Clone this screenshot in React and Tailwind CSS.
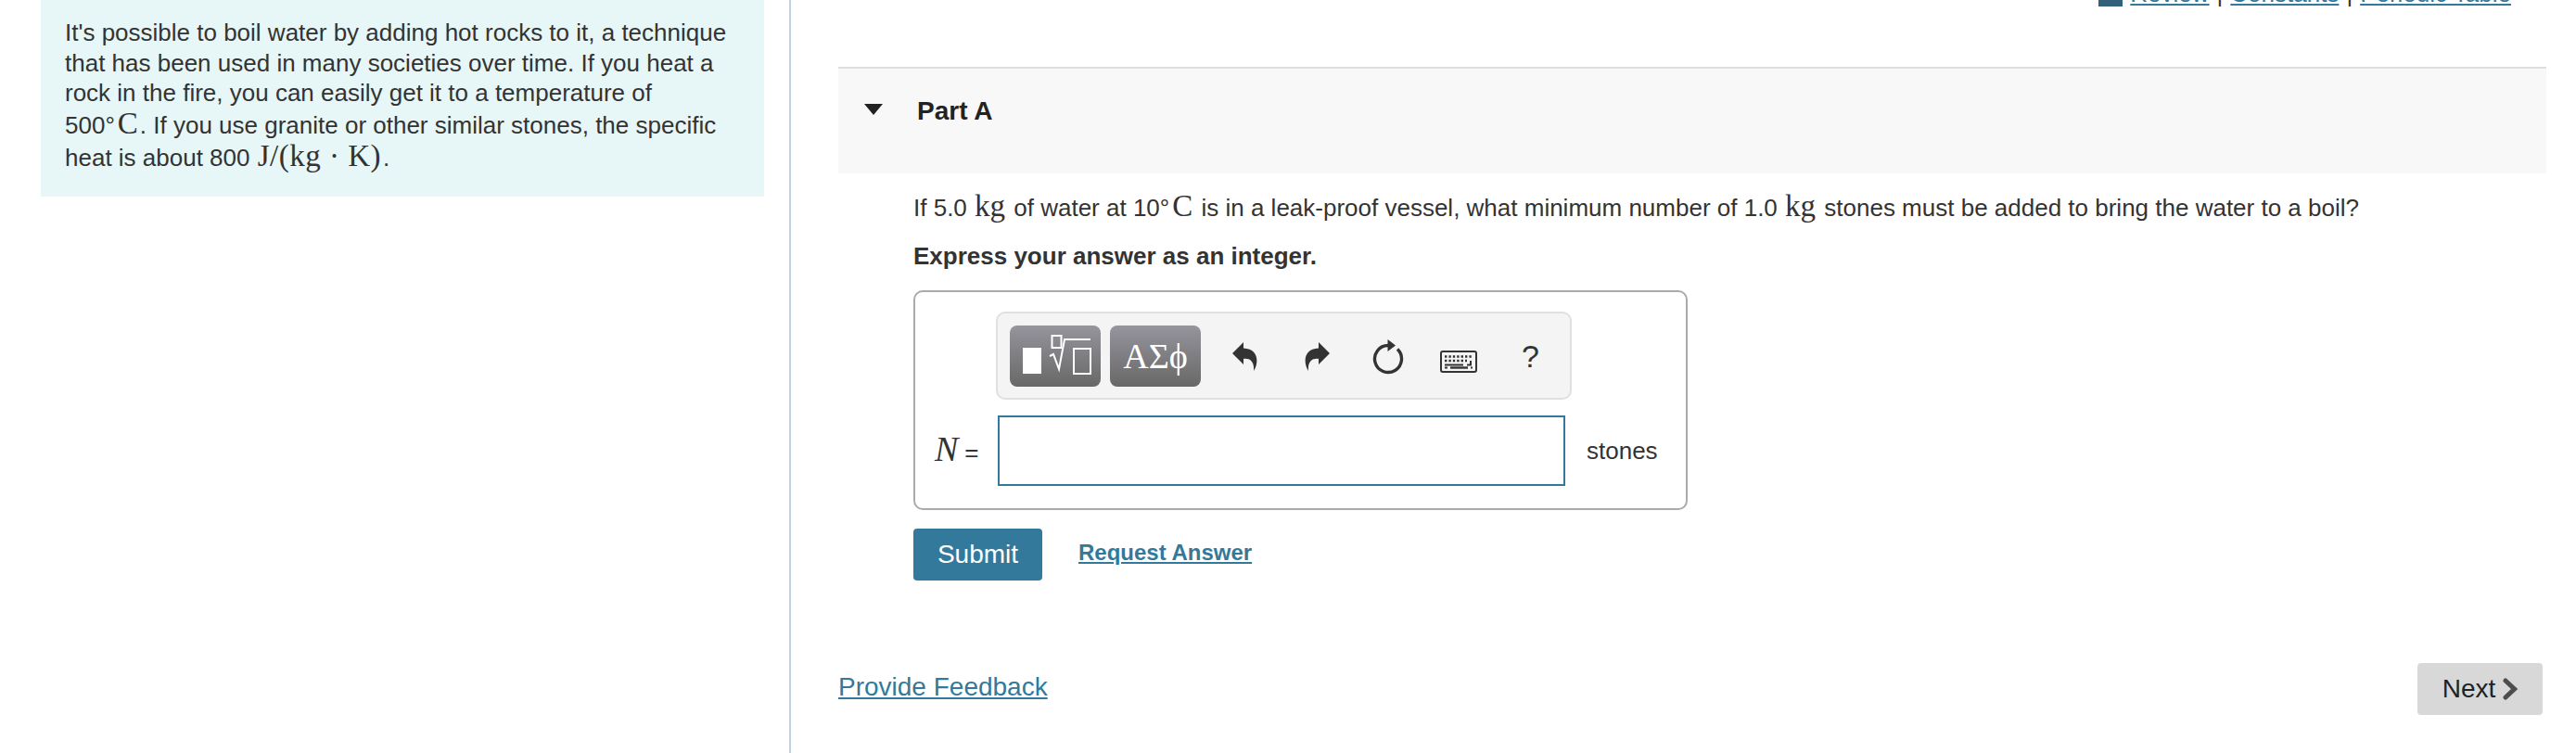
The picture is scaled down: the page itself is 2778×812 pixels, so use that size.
import React from "react";

const sans = { fontFamily: '"Liberation Sans", Arial, sans-serif' };

// TeX-looking inline math
const M = ({ children, className = "" }) => (
  <span className={`font-['Liberation_Serif',serif] text-[33px] leading-none ml-[1px] mr-[2px] ${className}`}>
    {children}
  </span>
);

const MathIcon = () => (
  <svg width="98" height="66" viewBox="0 0 98 66" fill="none">
    <rect x="14" y="24" width="20" height="28" fill="#fff" />
    <rect x="45.5" y="11" width="10" height="13" stroke="#fff" strokeWidth="2" />
    <path d="M43 33 L47 31 L53 47 L59 15 L87 15" stroke="#fff" strokeWidth="2" />
    <rect x="69" y="25" width="18" height="27" stroke="#fff" strokeWidth="2" />
  </svg>
);

const UndoIcon = ({ flip }) => (
  <svg className={flip ? "-scale-x-100" : ""} width="28" height="32" viewBox="0 0 28 32">
    <path d="M12 0 L0 12 L12 24 V18 C18 17 24 20 23 31 C29 22 28 7 12 6.5 Z" fill="#333" />
  </svg>
);

const ResetIcon = () => (
  <svg width="36" height="38" viewBox="0 0 36 38" fill="none">
    <path d="M18 6.5 A14.5 14.5 0 1 0 28 10.5" stroke="#333" strokeWidth="3.4" />
    <path d="M17.5 0 L26 6.5 L17.5 13 Z" fill="#333" />
  </svg>
);

const KeyboardIcon = () => (
  <svg width="40" height="24" viewBox="0 0 40 24" fill="none">
    <rect x="1" y="1" width="38" height="22" rx="2" stroke="#333" strokeWidth="2" />
    <path d="M5 6.5h29M5 11h24" stroke="#333" strokeWidth="2.4" strokeDasharray="2.4 2" />
    <path d="M33 11v4.5h-4" stroke="#333" strokeWidth="2" />
    <path d="M11 18.5h19" stroke="#333" strokeWidth="2.4" />
    <path d="M5 15.5h20M5 18.5h3M33 18.5h2" stroke="#333" strokeWidth="2" />
  </svg>
);

const ToolButton = ({ children }) => (
  <div className="w-[98px] h-[66px] rounded-[8px] bg-linear-to-b from-[#96959d] to-[#686868] flex items-center justify-center">
    {children}
  </div>
);

export default function App() {
  return (
    <div style={sans} className="flex w-[2778px] h-[812px] overflow-hidden bg-white text-[#333]">
      {/* left intro panel */}
      <div className="w-[851px] shrink-0 pl-[44px]">
        <div className="w-[780px] h-[212px] bg-[#e7f6f6] pl-[26px] pt-[19px] text-[26px] leading-[32.5px]">
          <p className="whitespace-nowrap">
            It's possible to boil water by adding hot rocks to it, a technique
            <br />
            that has been used in many societies over time. If you heat a
            <br />
            rock in the fire, you can easily get it to a temperature of
            <br />
            500°<M className="ml-[3px]">C</M>. If you use granite or other similar stones, the specific
          </p>
          <p className="whitespace-nowrap mt-[1px]">
            heat is about 800 <M className="tracking-[0.5px]">J/(kg · K)</M>.
          </p>
        </div>
      </div>

      {/* right question column */}
      <div className="flex-1 border-l-2 border-[#c0d2e4] pl-[51px] pr-[32px] flex flex-col">
        <div className="h-[72px] -mt-[23px] flex justify-end items-start pr-[38px] text-[26px] leading-[32px] shrink-0">
          <div className="flex items-center">
            <span className="w-[26px] h-[8px] bg-[#33607a] mr-[8px] self-end mb-[2px]" />
            <a className="underline text-[#33799b]">Review</a>
            <span className="mx-[8px]">|</span>
            <a className="underline text-[#33799b]">Constants</a>
            <span className="mx-[8px]">|</span>
            <a className="underline text-[#33799b]">Periodic Table</a>
          </div>
        </div>

        <div className="border-t-2 border-[#dedede] bg-[#f8f8f8] h-[115px] shrink-0 flex items-start pt-[29px] mt-[23px]">
          <svg className="ml-[28px] mt-[9px]" width="20" height="12" viewBox="0 0 20 12">
            <path d="M0 0H20L10 12Z" fill="#222" />
          </svg>
          <span className="ml-[37px] text-[28px] leading-[34px] font-bold text-[#222]">Part A</span>
        </div>

        <div className="pl-[81px] flex flex-col items-start">
          <p className="mt-[19px] text-[26px] leading-[34px] whitespace-nowrap">
            If 5.0 <M>kg</M> of water at 10°<M className="ml-[3px]">C</M> is in a leak-proof vessel, what minimum number
            of 1.0 <M>kg</M> stones must be added to bring the water to a boil?
          </p>
          <p className="mt-[18px] text-[26px] leading-[34px] font-bold">Express your answer as an integer.</p>

          {/* answer box */}
          <div className="mt-[20px] w-[835px] h-[237px] border-2 border-[#aaa] rounded-[10px] pt-[21px]">
            <div className="ml-[87px] w-[621px] h-[95px] border-2 border-[#e0e0e0] rounded-[10px] bg-[#f4f4f4] flex items-center pl-[13px]">
              <ToolButton>
                <MathIcon />
              </ToolButton>
              <div className="ml-[10px]">
                <ToolButton>
                  <span className="font-['Liberation_Serif',serif] text-white text-[38px] leading-none">ΑΣϕ</span>
                </ToolButton>
              </div>
              <div className="ml-[34px] mt-[3px]">
                <UndoIcon />
              </div>
              <div className="ml-[49px] mt-[3px]">
                <UndoIcon flip />
              </div>
              <div className="ml-[45px] mt-[2px]">
                <ResetIcon />
              </div>
              <div className="ml-[38px] mt-[12px]">
                <KeyboardIcon />
              </div>
              <span className="ml-[48px] text-[34px] leading-none font-normal text-[#333]">?</span>
            </div>
            <div className="flex items-center mt-[17px]">
              <span className="ml-[21px] w-[68px] whitespace-nowrap text-[26px]">
                <span className="font-['Liberation_Serif',serif] text-[38px] leading-none italic mr-[7px]">N</span>=
              </span>
              <div className="w-[612px] h-[76px] border-2 border-[#33799b] bg-white" />
              <span className="ml-[23px] text-[26px]">stones</span>
            </div>
          </div>

          <div className="mt-[20px] flex items-start">
            <button className="w-[139px] h-[56px] rounded-[4px] bg-[#33799b] text-white text-[28px]">Submit</button>
            <a className="ml-[39px] mt-[11px] text-[24px] leading-[30px] font-bold underline text-[#33799b]">
              Request Answer
            </a>
          </div>
        </div>

        <div className="mt-[89px] flex justify-between items-start pr-[4px]">
          <a className="mt-[9px] text-[28px] leading-[34px] underline text-[#33799b]">Provide Feedback</a>
          <button className="w-[135px] h-[56px] rounded-[4px] bg-[#d8d8d8] text-[#222] text-[28px] flex items-center justify-center gap-[8px]">
            Next
            <svg width="16" height="24" viewBox="0 0 16 24" fill="none">
              <path d="M3 3 L12.5 12 L3 21" stroke="#4d4d4d" strokeWidth="5" strokeLinecap="round" />
            </svg>
          </button>
        </div>
      </div>
    </div>
  );
}
